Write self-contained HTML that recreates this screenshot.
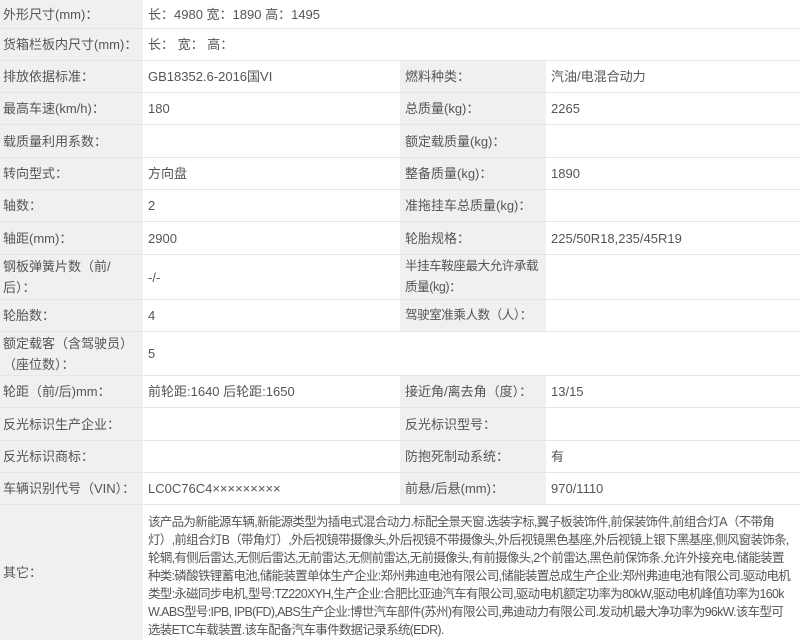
<!DOCTYPE html>
<html><head><meta charset="utf-8"><style>
body{margin:0;width:800px;height:640px;overflow:hidden;background:#fff;font-family:"Liberation Sans","Noto Sans CJK SC",sans-serif;font-size:13px;color:#555;position:relative}
.c{position:absolute;box-sizing:border-box;display:flex;align-items:center;padding:0 5px;line-height:21px;border-bottom:1px solid #e6e6e6;white-space:nowrap}
.g{background:#f0f0f0}
.o{font-size:12.5px;line-height:18px;letter-spacing:-0.7px;color:#555;overflow:hidden}
.s{font-size:12.5px;letter-spacing:-0.4px}
</style></head><body>
<div class="c g" style="left:0;top:0;width:143px;height:29px;padding-left:3px">外形尺寸(mm)：</div>
<div class="c" style="left:143px;top:0;width:657px;height:29px">长：4980 宽：1890 高：1495</div>
<div class="c g" style="left:0;top:29px;width:143px;height:32px;padding-left:3px">货箱栏板内尺寸(mm)：</div>
<div class="c" style="left:143px;top:29px;width:657px;height:32px">长： 宽： 高：</div>

<div class="c g" style="left:0;top:61px;width:143px;height:32px;padding-left:3px">排放依据标准：</div>
<div class="c" style="left:143px;top:61px;width:257px;height:32px">GB18352.6-2016国VI</div>
<div class="c g" style="left:400px;top:61px;width:146px;height:32px">燃料种类：</div>
<div class="c" style="left:546px;top:61px;width:254px;height:32px">汽油/电混合动力</div>

<div class="c g" style="left:0;top:93px;width:143px;height:32px;padding-left:3px">最高车速(km/h)：</div>
<div class="c" style="left:143px;top:93px;width:257px;height:32px">180</div>
<div class="c g" style="left:400px;top:93px;width:146px;height:32px">总质量(kg)：</div>
<div class="c" style="left:546px;top:93px;width:254px;height:32px">2265</div>

<div class="c g" style="left:0;top:125px;width:143px;height:33px;padding-left:3px">载质量利用系数：</div>
<div class="c" style="left:143px;top:125px;width:257px;height:33px"></div>
<div class="c g" style="left:400px;top:125px;width:146px;height:33px">额定载质量(kg)：</div>
<div class="c" style="left:546px;top:125px;width:254px;height:33px"></div>

<div class="c g" style="left:0;top:158px;width:143px;height:32px;padding-left:3px">转向型式：</div>
<div class="c" style="left:143px;top:158px;width:257px;height:32px">方向盘</div>
<div class="c g" style="left:400px;top:158px;width:146px;height:32px">整备质量(kg)：</div>
<div class="c" style="left:546px;top:158px;width:254px;height:32px">1890</div>

<div class="c g" style="left:0;top:190px;width:143px;height:32px;padding-left:3px">轴数：</div>
<div class="c" style="left:143px;top:190px;width:257px;height:32px">2</div>
<div class="c g" style="left:400px;top:190px;width:146px;height:32px">准拖挂车总质量(kg)：</div>
<div class="c" style="left:546px;top:190px;width:254px;height:32px"></div>

<div class="c g" style="left:0;top:222px;width:143px;height:33px;padding-left:3px">轴距(mm)：</div>
<div class="c" style="left:143px;top:222px;width:257px;height:33px">2900</div>
<div class="c g" style="left:400px;top:222px;width:146px;height:33px">轮胎规格：</div>
<div class="c" style="left:546px;top:222px;width:254px;height:33px">225/50R18,235/45R19</div>

<div class="c g" style="left:0;top:255px;width:143px;height:45px;padding-left:3px">钢板弹簧片数（前/<br>后）：</div>
<div class="c" style="left:143px;top:255px;width:257px;height:45px">-/-</div>
<div class="c g s" style="left:400px;top:255px;width:146px;height:45px">半挂车鞍座最大允许承载<br>质量(kg)：</div>
<div class="c" style="left:546px;top:255px;width:254px;height:45px"></div>

<div class="c g" style="left:0;top:300px;width:143px;height:32px;padding-left:3px">轮胎数：</div>
<div class="c" style="left:143px;top:300px;width:257px;height:32px">4</div>
<div class="c g s" style="left:400px;top:300px;width:146px;height:32px">驾驶室准乘人数（人）：</div>
<div class="c" style="left:546px;top:300px;width:254px;height:32px"></div>

<div class="c g" style="left:0;top:332px;width:143px;height:44px;padding-left:3px">额定载客（含驾驶员）<br>（座位数）：</div>
<div class="c" style="left:143px;top:332px;width:657px;height:44px">5</div>

<div class="c g" style="left:0;top:376px;width:143px;height:32px;padding-left:3px">轮距（前/后)mm：</div>
<div class="c" style="left:143px;top:376px;width:257px;height:32px">前轮距:1640 后轮距:1650</div>
<div class="c g" style="left:400px;top:376px;width:146px;height:32px">接近角/离去角（度）：</div>
<div class="c" style="left:546px;top:376px;width:254px;height:32px">13/15</div>

<div class="c g" style="left:0;top:408px;width:143px;height:33px;padding-left:3px">反光标识生产企业：</div>
<div class="c" style="left:143px;top:408px;width:257px;height:33px"></div>
<div class="c g" style="left:400px;top:408px;width:146px;height:33px">反光标识型号：</div>
<div class="c" style="left:546px;top:408px;width:254px;height:33px"></div>

<div class="c g" style="left:0;top:441px;width:143px;height:32px;padding-left:3px">反光标识商标：</div>
<div class="c" style="left:143px;top:441px;width:257px;height:32px"></div>
<div class="c g" style="left:400px;top:441px;width:146px;height:32px">防抱死制动系统：</div>
<div class="c" style="left:546px;top:441px;width:254px;height:32px">有</div>

<div class="c g" style="left:0;top:473px;width:143px;height:32px;padding-left:3px">车辆识别代号（VIN）：</div>
<div class="c" style="left:143px;top:473px;width:257px;height:32px">LC0C76C4×××××××××</div>
<div class="c g" style="left:400px;top:473px;width:146px;height:32px">前悬/后悬(mm)：</div>
<div class="c" style="left:546px;top:473px;width:254px;height:32px">970/1110</div>

<div class="c g" style="left:0;top:505px;width:143px;height:135px;padding-left:3px;border:0">其它：</div>
<div class="c o" style="left:143px;top:505px;width:657px;height:135px;border:0;padding-top:8px;padding-right:0;display:block">该产品为新能源车辆,新能源类型为插电式混合动力.标配全景天窗.选装字标,翼子板装饰件,前保装饰件,前组合灯A（不带角<br>灯）,前组合灯B（带角灯）,外后视镜带摄像头,外后视镜不带摄像头,外后视镜黑色基座,外后视镜上银下黑基座,侧风窗装饰条,<br>轮辋,有侧后雷达,无侧后雷达,无前雷达,无侧前雷达,无前摄像头,有前摄像头,2个前雷达,黑色前保饰条.允许外接充电.储能装置<br>种类:磷酸铁锂蓄电池,储能装置单体生产企业:郑州弗迪电池有限公司,储能装置总成生产企业:郑州弗迪电池有限公司.驱动电机<br>类型:永磁同步电机,型号:TZ220XYH,生产企业:合肥比亚迪汽车有限公司,驱动电机额定功率为80kW,驱动电机峰值功率为160k<br>W.ABS型号:IPB, IPB(FD),ABS生产企业:博世汽车部件(苏州)有限公司,弗迪动力有限公司.发动机最大净功率为96kW.该车型可<br>选装ETC车载装置.该车配备汽车事件数据记录系统(EDR).</div>
</body></html>
